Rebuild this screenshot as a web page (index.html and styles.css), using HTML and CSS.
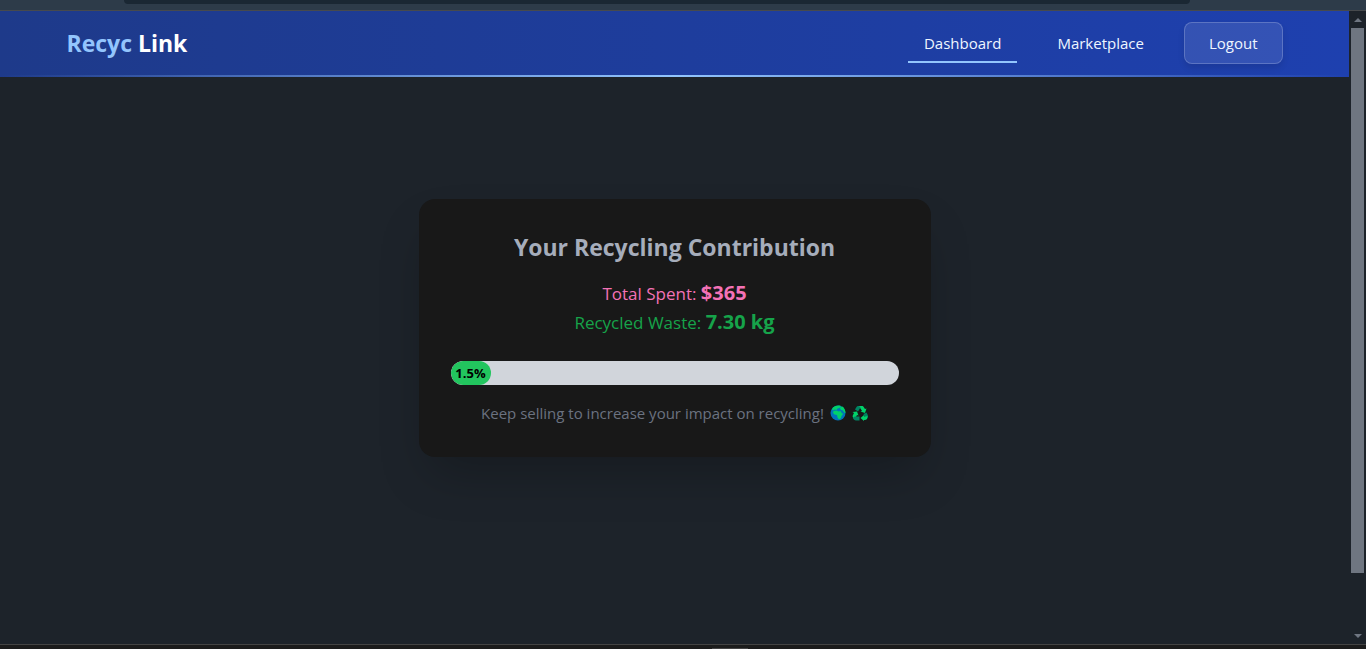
FILE: index.html
```html
<!DOCTYPE html>
<html lang="en">
<head>
  <meta charset="UTF-8" />
  <title>Recyc Link - Dashboard</title>
  <meta name="viewport" content="width=device-width, initial-scale=1" />
  <link rel="stylesheet" href="styles.css">
</head>
<body>

  <div class="toolbar-edge"><div class="address-edge"></div></div>

  <div class="window">
    <div class="page">
      <header class="navbar">
        <div class="navbar-inner">
          <a class="logo" href="#"><span>Recyc</span> Link</a>
          <nav>
            <a class="nav-link active" href="#">Dashboard</a>
            <a class="nav-link" href="#">Marketplace</a>
            <button class="logout" type="button">Logout</button>
          </nav>
        </div>
        <div class="navbar-line"></div>
      </header>

      <main>
        <section class="card">
          <h2>Your Recycling Contribution</h2>
          <p class="stat spent">Total Spent: <strong>$365</strong></p>
          <p class="stat waste">Recycled Waste: <strong>7.30 kg</strong></p>
          <div class="progress">
            <div class="progress-fill" style="width: 1.5%">1.5%</div>
          </div>
          <p class="note">
            <span>Keep selling to increase your impact on recycling!</span>
            <svg class="emoji" viewBox="0 0 32 32" role="img" aria-label="Globe">
              <circle cx="16" cy="16" r="15" fill="#0074ba" />
              <path fill="#00d26a" d="M6 5C10 2 16 0 22 2l-3 4-4 1-2 3-4-1-3 2-2-2z" />
              <path fill="#00d26a" d="M7 12l6-1 4 2 4-1 3 5h3l-4 5-1 4-4 3-3-4-1-5-5-1-3-3z" />
              <path fill="#00d26a" d="M21 4l4-1c4 3 6 8 6 13l-3-1-2-4-4-1-2-3z" />
            </svg>
            <svg class="emoji" viewBox="0 0 32 32" role="img" aria-label="Recycle">
              <path fill="#00d26a" d="M12 2h8c2 0 3 1 4 3l2 3 3-1-3 9-9-3 3-1-3-5z" />
              <path fill="#008463" d="M12 2c2 0 4 1 5 3l-5 8-6-4 3-5c1-1 2-2 3-2z" />
              <path fill="#00d26a" d="M1 14l9-1 3 8-3-1-2 4 1 5c-4 0-6-2-7-4s-1-3 0-5l2-4z" />
              <path fill="#008463" d="M7 23h8v8H8c-3 0-5-2-6-5 1-2 3-3 5-3z" />
              <path fill="#008463" d="M23 18l6-3 2 4c1 2 1 4 0 6l-5 1z" />
              <path fill="#00d26a" d="M17 26l7-6v3c3 0 6 0 7-2 1 5-1 9-6 9h-1v2z" />
            </svg>
          </p>
        </section>
      </main>
    </div>

    <div class="scrollbar">
      <span class="arrow arrow-up"></span>
      <div class="track"><div class="thumb"></div></div>
      <span class="arrow arrow-down"></span>
    </div>
  </div>

  <div class="taskbar-edge"><div class="handle"></div></div>

</body>
</html>
```
FILE: styles.css
```css
* {
  box-sizing: border-box;
}

body {
  font-family: 'Segoe UI', 'Open Sans', sans-serif;
  background-color: #1d232a;
  margin: 0;
  height: 100vh;
  display: flex;
  flex-direction: column;
  overflow: hidden;
}

.toolbar-edge {
  height: 11px;
  padding: 0 176px 0 124px;
  background-color: #2d3b49;
  border-bottom: 1px solid #474a4d;
}

.address-edge {
  height: 4px;
  background-color: #1a2733;
  border-radius: 0 0 12px 12px;
}

.window {
  flex: 1;
  display: flex;
  min-height: 0;
}

.page {
  flex: 1;
  overflow: hidden;
}

.navbar {
  background: linear-gradient(to right, #1e3a8a, #1e40af);
}

.navbar-inner {
  max-width: 1280px;
  height: 64px;
  margin: 0 auto;
  padding: 0 32px;
  display: flex;
  align-items: center;
  justify-content: space-between;
}

.navbar-line {
  height: 2px;
  background: linear-gradient(to right, transparent, #93c5fd, transparent);
}

.logo {
  color: #fff;
  font-size: 23px;
  font-weight: 700;
  text-decoration: none;
}

.logo span {
  color: #93c5fd;
}

nav {
  display: flex;
  align-items: center;
  gap: 24px;
}

.nav-link {
  padding: 8px 16px 6px;
  border-bottom: 2px solid transparent;
  color: #eff6ff;
  font-size: 15px;
  font-weight: 500;
  line-height: 24px;
  text-decoration: none;
}

.nav-link.active {
  border-color: #93c5fd;
}

.logout {
  padding: 8px 24px;
  background-color: rgba(255, 255, 255, 0.1);
  color: #eff6ff;
  border: 1px solid rgba(255, 255, 255, 0.2);
  border-radius: 8px;
  box-shadow: 0 4px 6px rgba(0, 0, 0, 0.1);
  font-family: inherit;
  font-size: 15px;
  font-weight: 500;
  line-height: 24px;
  cursor: pointer;
}

main {
  padding: 122px 16px;
}

.card {
  max-width: 512px;
  margin: 0 auto;
  padding: 32px;
  background-color: #181818;
  border-radius: 16px;
  box-shadow: 0 25px 50px -12px rgba(0, 0, 0, 0.25);
  text-align: center;
}

.card h2 {
  margin: 0 0 16px;
  color: #a6adbb;
  font-size: 23px;
  font-weight: 700;
  line-height: 32px;
}

.stat {
  margin: 0;
  font-size: 17px;
  line-height: 29px;
}

.stat strong {
  font-size: 20px;
  line-height: 24px;
}

.spent {
  color: #f472b6;
}

.waste {
  color: #16a34a;
}

.progress {
  height: 24px;
  margin: 24px 0 16px;
  background-color: #d1d5db;
  border-radius: 12px;
  overflow: hidden;
}

.progress-fill {
  min-width: 40px;
  height: 24px;
  background-color: #22c55e;
  border-radius: 12px;
  color: #000;
  font-size: 13px;
  font-weight: 700;
  line-height: 24px;
  text-align: center;
}

.note {
  display: flex;
  align-items: center;
  justify-content: center;
  gap: 6px;
  margin: 0;
  color: #6b7280;
  font-size: 15px;
  line-height: 24px;
}

.emoji {
  flex: none;
  width: 16px;
  height: 16px;
}

.scrollbar {
  width: 17px;
  display: flex;
  flex-direction: column;
  align-items: center;
}

.arrow {
  height: 17px;
  display: flex;
  align-items: center;
}

.arrow::before {
  content: "";
  border-left: 4px solid transparent;
  border-right: 4px solid transparent;
}

.arrow-up::before {
  border-bottom: 4px solid #6f7681;
}

.arrow-down::before {
  border-top: 4px solid #6f7681;
}

.track {
  flex: 1;
}

.thumb {
  width: 13px;
  height: 91%;
  background-color: #6f7681;
}

.taskbar-edge {
  height: 5px;
  padding: 3px 0 0 94px;
  background-color: #1c1c1c;
  border-top: 1px solid #444;
}

.handle {
  width: 36px;
  height: 1px;
  margin: 0 auto;
  background-color: #444;
}
```
